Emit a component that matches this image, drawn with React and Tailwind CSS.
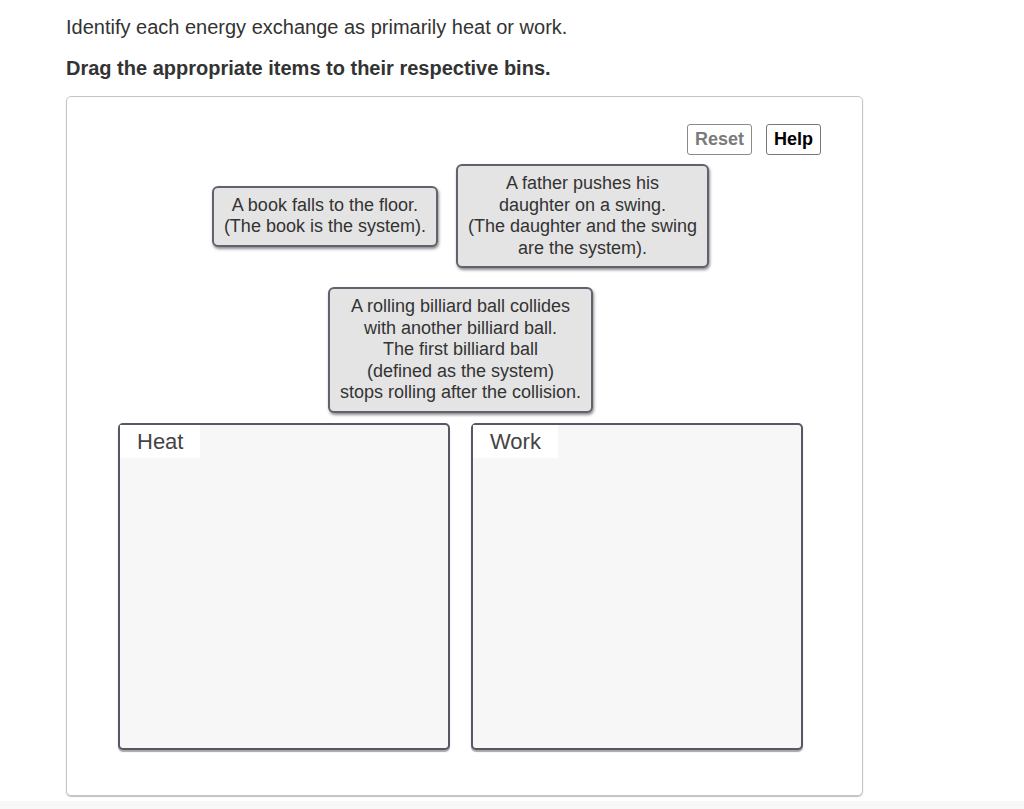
export default function App() {
  const font = { fontFamily: '"Liberation Sans", Arial, sans-serif' };
  const tile =
    "bg-[#e4e4e4] border-2 border-[#62626f] rounded-[6px] shadow-[1px_2px_3px_rgba(0,0,0,0.45)] px-[10px] py-[7px] text-center text-[18px] leading-[21.5px] text-[#333]";
  return (
    <div className="w-[1024px] min-h-[809px] bg-white relative" style={font}>
      <div className="pl-[66px] pt-[16px]">
        <p className="text-[20px] leading-[22px] text-[#333]">
          Identify each energy exchange as primarily heat or work.
        </p>
        <p className="text-[20px] leading-[22px] font-bold text-[#333] mt-[19px]">
          Drag the appropriate items to their respective bins.
        </p>
        <div className="mt-[17px] w-[797px] h-[700px] border border-[#c4c4c4] rounded-[5px] shadow-[0_1px_1px_rgba(0,0,0,0.25)] flex flex-col">
          <div className="flex justify-end gap-[14px] pr-[41px] pt-[27px]">
            <button className="h-[31px] px-[7px] border border-[#8a8a8a] rounded-[3px] text-[18px] font-bold text-[#7a7a7a] bg-white">
              Reset
            </button>
            <button className="h-[31px] px-[7px] border border-[#777] rounded-[3px] text-[18px] font-bold text-black bg-white">
              Help
            </button>
          </div>
          <div className="ml-[51px] w-[685px] flex flex-col items-center">
            <div className="flex items-center justify-center gap-[18px] mt-[9px]">
              <div className={tile}>
                A book falls to the floor.
                <br />
                (The book is the system).
              </div>
              <div className={tile}>
                A father pushes his
                <br />
                daughter on a swing.
                <br />
                (The daughter and the swing
                <br />
                are the system).
              </div>
            </div>
            <div className={tile + " mt-[19px]"}>
              A rolling billiard ball collides
              <br />
              with another billiard ball.
              <br />
              The first billiard ball
              <br />
              (defined as the system)
              <br />
              stops rolling after the collision.
            </div>
            <div className="flex gap-[21px] mt-[10px] w-full">
              {["Heat", "Work"].map((l) => (
                <div
                  key={l}
                  className="flex-1 h-[327px] bg-[#f7f7f7] border-2 border-[#575766] rounded-[5px] shadow-[0_2px_1px_rgba(0,0,0,0.35)]"
                >
                  <div className="inline-block bg-white px-[17px] pt-[4px] h-[33px] text-[22px] leading-[26px] text-[#444]">
                    {l}
                  </div>
                </div>
              ))}
            </div>
          </div>
        </div>
      </div>
      <div className="absolute left-0 right-0 bottom-0 h-[8px] bg-[#f8f8f8]" />
    </div>
  );
}
